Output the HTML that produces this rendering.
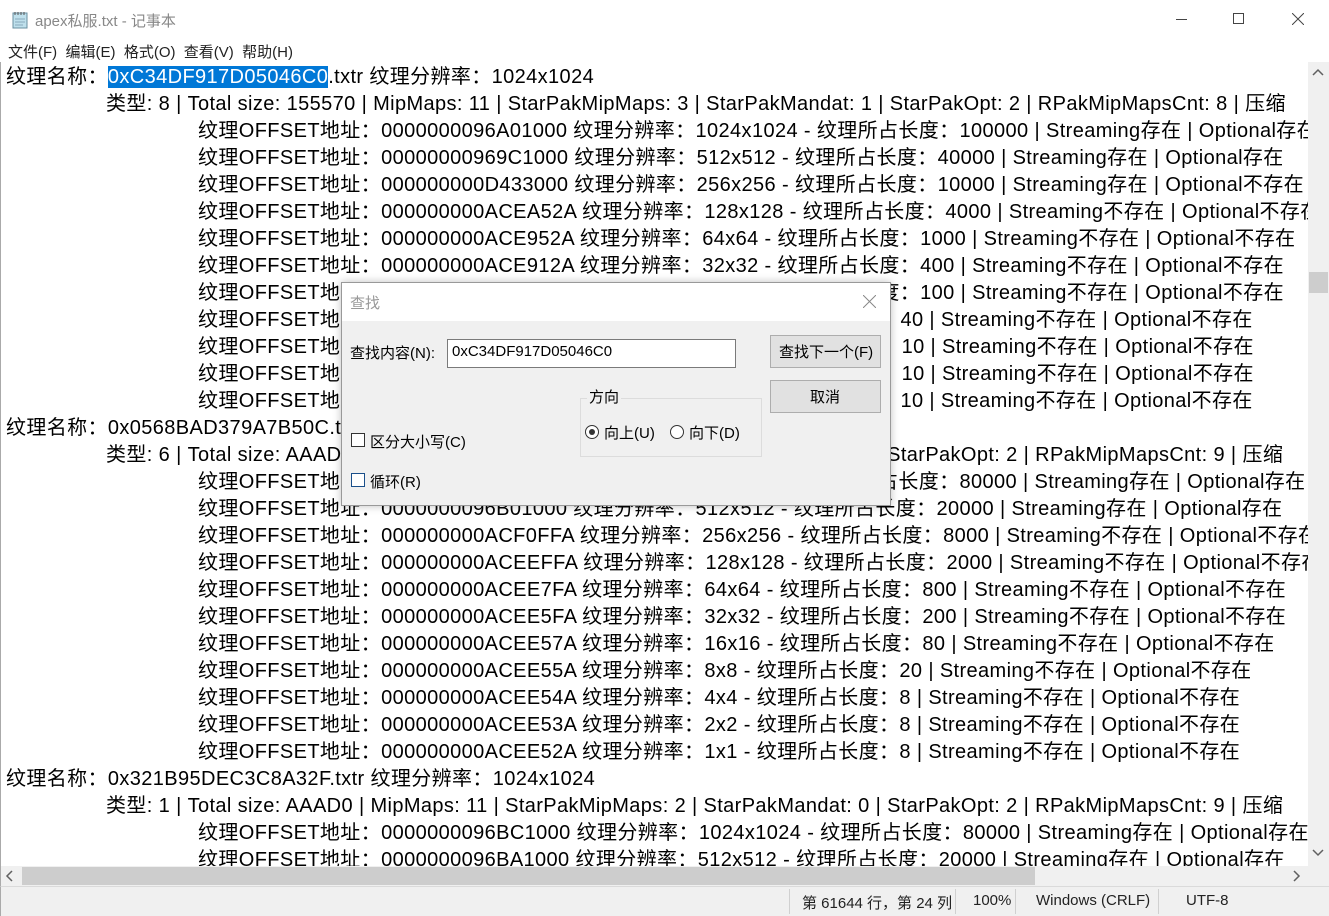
<!DOCTYPE html>
<html><head><meta charset="utf-8"><style>
*{margin:0;padding:0;box-sizing:border-box}
body{width:1329px;height:916px;overflow:hidden;background:#fff;font-family:"Liberation Sans","Noto Sans CJK SC",sans-serif;position:relative}
.t{position:absolute;white-space:pre;font-size:20px;line-height:27px;color:#000;letter-spacing:0.38px}
#text{position:absolute;left:0;top:62px;width:1308px;height:804px;overflow:hidden;background:#fff;border-left:1px solid #aaa}
.sel{background:#0078d7;color:#fff}
.ui{font-family:"Liberation Sans","Noto Sans CJK SC",sans-serif;font-size:15px;position:absolute;white-space:pre}
</style></head><body>
<div style="position:absolute;left:0;top:0;width:1329px;height:38px;background:#fff"></div>
<svg style="position:absolute;left:11px;top:10px" width="19" height="19" viewBox="0 0 19 19"><rect x="2" y="3" width="14" height="15" fill="#bfe0ec" stroke="#6a8fa0"/><path d="M4 2v3M7 2v3M10 2v3M13 2v3" stroke="#555"/><path d="M4 9h10M4 12h10M4 15h8" stroke="#8ab"/></svg>
<div class="ui" style="left:35px;top:10px;color:#888">apex私服.txt - 记事本</div>
<div style="position:absolute;left:1176px;top:19px;width:11px;height:1px;background:#444"></div>
<div style="position:absolute;left:1233px;top:13px;width:11px;height:11px;border:1px solid #444"></div>
<svg style="position:absolute;left:1292px;top:13px" width="12" height="12"><path d="M0 0L12 12M12 0L0 12" stroke="#444"/></svg>
<div class="ui" style="left:8px;top:41px;color:#222">文件(F)  编辑(E)  格式(O)  查看(V)  帮助(H)</div>
<div id="text">
<div class="t" style="left:5px;top:2px">纹理名称：<span class="sel">0xC34DF917D05046C0</span>.txtr 纹理分辨率：1024x1024</div>
<div class="t" style="left:105px;top:29px">类型: 8 | Total size: 155570 | MipMaps: 11 | StarPakMipMaps: 3 | StarPakMandat: 1 | StarPakOpt: 2 | RPakMipMapsCnt: 8 | 压缩</div>
<div class="t" style="left:197px;top:56px">纹理OFFSET地址：0000000096A01000 纹理分辨率：1024x1024 - 纹理所占长度：100000 | Streaming存在 | Optional存在</div>
<div class="t" style="left:197px;top:83px">纹理OFFSET地址：00000000969C1000 纹理分辨率：512x512 - 纹理所占长度：40000 | Streaming存在 | Optional存在</div>
<div class="t" style="left:197px;top:110px">纹理OFFSET地址：000000000D433000 纹理分辨率：256x256 - 纹理所占长度：10000 | Streaming存在 | Optional不存在</div>
<div class="t" style="left:197px;top:137px">纹理OFFSET地址：000000000ACEA52A 纹理分辨率：128x128 - 纹理所占长度：4000 | Streaming不存在 | Optional不存在</div>
<div class="t" style="left:197px;top:164px">纹理OFFSET地址：000000000ACE952A 纹理分辨率：64x64 - 纹理所占长度：1000 | Streaming不存在 | Optional不存在</div>
<div class="t" style="left:197px;top:191px">纹理OFFSET地址：000000000ACE912A 纹理分辨率：32x32 - 纹理所占长度：400 | Streaming不存在 | Optional不存在</div>
<div class="t" style="left:197px;top:218px">纹理OFFSET地址：000000000ACE902A 纹理分辨率：16x16 - 纹理所占长度：100 | Streaming不存在 | Optional不存在</div>
<div class="t" style="left:197px;top:245px">纹理OFFSET地址：000000000ACE8FEA 纹理分辨率：8x8 - 纹理所占长度：40 | Streaming不存在 | Optional不存在</div>
<div class="t" style="left:197px;top:272px">纹理OFFSET地址：000000000ACE8FDA 纹理分辨率：4x4 - 纹理所占长度：10 | Streaming不存在 | Optional不存在</div>
<div class="t" style="left:197px;top:299px">纹理OFFSET地址：000000000ACE8FCA 纹理分辨率：2x2 - 纹理所占长度：10 | Streaming不存在 | Optional不存在</div>
<div class="t" style="left:197px;top:326px">纹理OFFSET地址：000000000ACE8FBA 纹理分辨率：1x1 - 纹理所占长度：10 | Streaming不存在 | Optional不存在</div>
<div class="t" style="left:5px;top:353px">纹理名称：0x0568BAD379A7B50C.txtr 纹理分辨率：1024x1024</div>
<div class="t" style="left:105px;top:380px">类型: 6 | Total size: AAAD0 | MipMaps: 11 | StarPakMipMaps: 2 | StarPakMandat: 0 | StarPakOpt: 2 | RPakMipMapsCnt: 9 | 压缩</div>
<div class="t" style="left:197px;top:407px">纹理OFFSET地址：0000000096B31000 纹理分辨率：1024x1024 - 纹理所占长度：80000 | Streaming存在 | Optional存在</div>
<div class="t" style="left:197px;top:434px">纹理OFFSET地址：0000000096B01000 纹理分辨率：512x512 - 纹理所占长度：20000 | Streaming存在 | Optional存在</div>
<div class="t" style="left:197px;top:461px">纹理OFFSET地址：000000000ACF0FFA 纹理分辨率：256x256 - 纹理所占长度：8000 | Streaming不存在 | Optional不存在</div>
<div class="t" style="left:197px;top:488px">纹理OFFSET地址：000000000ACEEFFA 纹理分辨率：128x128 - 纹理所占长度：2000 | Streaming不存在 | Optional不存在</div>
<div class="t" style="left:197px;top:515px">纹理OFFSET地址：000000000ACEE7FA 纹理分辨率：64x64 - 纹理所占长度：800 | Streaming不存在 | Optional不存在</div>
<div class="t" style="left:197px;top:542px">纹理OFFSET地址：000000000ACEE5FA 纹理分辨率：32x32 - 纹理所占长度：200 | Streaming不存在 | Optional不存在</div>
<div class="t" style="left:197px;top:569px">纹理OFFSET地址：000000000ACEE57A 纹理分辨率：16x16 - 纹理所占长度：80 | Streaming不存在 | Optional不存在</div>
<div class="t" style="left:197px;top:596px">纹理OFFSET地址：000000000ACEE55A 纹理分辨率：8x8 - 纹理所占长度：20 | Streaming不存在 | Optional不存在</div>
<div class="t" style="left:197px;top:623px">纹理OFFSET地址：000000000ACEE54A 纹理分辨率：4x4 - 纹理所占长度：8 | Streaming不存在 | Optional不存在</div>
<div class="t" style="left:197px;top:650px">纹理OFFSET地址：000000000ACEE53A 纹理分辨率：2x2 - 纹理所占长度：8 | Streaming不存在 | Optional不存在</div>
<div class="t" style="left:197px;top:677px">纹理OFFSET地址：000000000ACEE52A 纹理分辨率：1x1 - 纹理所占长度：8 | Streaming不存在 | Optional不存在</div>
<div class="t" style="left:5px;top:704px">纹理名称：0x321B95DEC3C8A32F.txtr 纹理分辨率：1024x1024</div>
<div class="t" style="left:105px;top:731px">类型: 1 | Total size: AAAD0 | MipMaps: 11 | StarPakMipMaps: 2 | StarPakMandat: 0 | StarPakOpt: 2 | RPakMipMapsCnt: 9 | 压缩</div>
<div class="t" style="left:197px;top:758px">纹理OFFSET地址：0000000096BC1000 纹理分辨率：1024x1024 - 纹理所占长度：80000 | Streaming存在 | Optional存在</div>
<div class="t" style="left:197px;top:785px">纹理OFFSET地址：0000000096BA1000 纹理分辨率：512x512 - 纹理所占长度：20000 | Streaming存在 | Optional存在</div>
</div>
<div style="position:absolute;left:1308px;top:62px;width:21px;height:804px;background:#f0f0f0"></div>
<svg style="position:absolute;left:1312px;top:68px" width="12" height="10"><path d="M1 7L6 2L11 7" stroke="#606060" stroke-width="1.5" fill="none"/></svg>
<div style="position:absolute;left:1309px;top:272px;width:19px;height:21px;background:#cdcdcd"></div>
<svg style="position:absolute;left:1312px;top:848px" width="12" height="10"><path d="M1 2L6 7L11 2" stroke="#606060" stroke-width="1.5" fill="none"/></svg>
<div style="position:absolute;left:0;top:866px;width:1329px;height:20px;background:#f0f0f0;border-left:1px solid #aaa"></div>
<svg style="position:absolute;left:5px;top:870px" width="10" height="12"><path d="M7 1L2 6L7 11" stroke="#606060" stroke-width="1.5" fill="none"/></svg>
<div style="position:absolute;left:22px;top:867px;width:1013px;height:18px;background:#cdcdcd"></div>
<svg style="position:absolute;left:1291px;top:870px" width="10" height="12"><path d="M3 1L8 6L3 11" stroke="#606060" stroke-width="1.5" fill="none"/></svg>
<div style="position:absolute;left:0;top:886px;width:1329px;height:30px;background:#f0f0f0;border-top:1px solid #dadada;border-left:1px solid #aaa"></div>
<div style="position:absolute;left:789px;top:889px;width:1px;height:25px;background:#d0d0d0"></div>
<div style="position:absolute;left:955px;top:889px;width:1px;height:25px;background:#d0d0d0"></div>
<div style="position:absolute;left:1015px;top:889px;width:1px;height:25px;background:#d0d0d0"></div>
<div style="position:absolute;left:1158px;top:889px;width:1px;height:25px;background:#d0d0d0"></div>
<div class="ui" style="left:802px;top:892px;color:#222">第 61644 行，第 24 列</div>
<div class="ui" style="left:973px;top:892px;color:#222">100%</div>
<div class="ui" style="left:1036px;top:892px;color:#222">Windows (CRLF)</div>
<div class="ui" style="left:1186px;top:892px;color:#222">UTF-8</div>
<div style="position:absolute;left:341px;top:282px;width:550px;height:224px;background:#f0f0f0;border:1px solid #999;box-shadow:0 0 8px rgba(0,0,0,.25)">
 <div style="position:absolute;left:0;top:0;width:548px;height:38px;background:#fff"></div>
 <div class="ui" style="left:8px;top:9px;color:#999">查找</div>
 <svg style="position:absolute;left:521px;top:12px" width="13" height="13"><path d="M0 0L13 13M13 0L0 13" stroke="#888"/></svg>
 <div class="ui" style="left:8px;top:59px;color:#000">查找内容(N):</div>
 <div style="position:absolute;left:105px;top:56px;width:289px;height:29px;background:#fff;border:1px solid #7a7a7a"></div>
 <div class="ui" style="left:110px;top:60px;color:#000">0xC34DF917D05046C0</div>
 <div style="position:absolute;left:428px;top:52px;width:111px;height:33px;background:#e1e1e1;border:1px solid #adadad"></div>
 <div class="ui" style="left:437px;top:58px;color:#000">查找下一个(F)</div>
 <div style="position:absolute;left:428px;top:97px;width:111px;height:33px;background:#e1e1e1;border:1px solid #adadad"></div>
 <div class="ui" style="left:468px;top:103px;color:#000">取消</div>
 <div style="position:absolute;left:238px;top:115px;width:182px;height:59px;border:1px solid #dcdcdc"></div>
 <div class="ui" style="left:245px;top:103px;color:#000;background:#f0f0f0;padding:0 2px">方向</div>
 <div style="position:absolute;left:243px;top:142px;width:14px;height:14px;border:1px solid #333;border-radius:50%;background:#fff"></div>
 <div style="position:absolute;left:247px;top:146px;width:6px;height:6px;border-radius:50%;background:#333"></div>
 <div class="ui" style="left:262px;top:139px;color:#000">向上(U)</div>
 <div style="position:absolute;left:328px;top:142px;width:14px;height:14px;border:1px solid #333;border-radius:50%;background:#fff"></div>
 <div class="ui" style="left:347px;top:139px;color:#000">向下(D)</div>
 <div style="position:absolute;left:9px;top:150px;width:14px;height:14px;border:1px solid #333;background:#fff"></div>
 <div class="ui" style="left:28px;top:148px;color:#000">区分大小写(C)</div>
 <div style="position:absolute;left:9px;top:190px;width:14px;height:14px;border:1px solid #1a4f8a;background:#fff"></div>
 <div class="ui" style="left:28px;top:188px;color:#000">循环(R)</div>
</div>
</body></html>
